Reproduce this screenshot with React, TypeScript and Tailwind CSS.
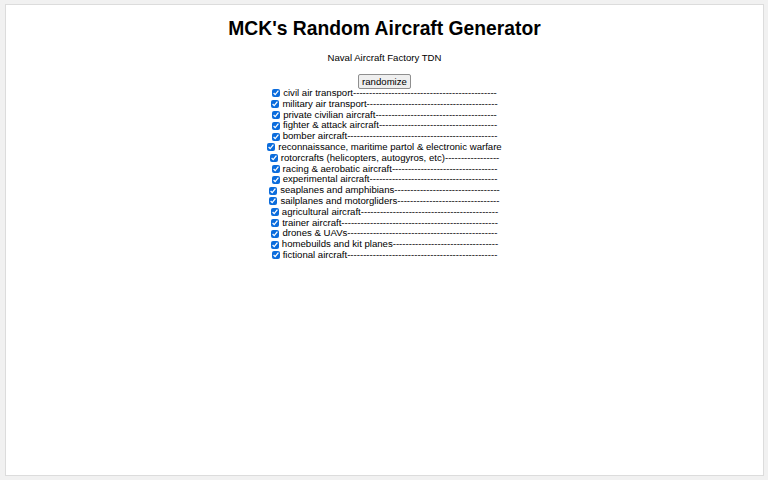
import React from "react";

// label, number of trailing dashes
const categories: [string, number][] = [
  ["civil air transport", 45],
  ["military air transport", 41],
  ["private civilian aircraft", 38],
  ["fighter & attack aircraft", 37],
  ["bomber aircraft", 47],
  ["reconnaissance, maritime partol & electronic warfare", 0],
  ["rotorcrafts (helicopters, autogyros, etc)", 17],
  ["racing & aerobatic aircraft", 33],
  ["experimental aircraft", 40],
  ["seaplanes and amphibians", 33],
  ["sailplanes and motorgliders", 32],
  ["agricultural aircraft", 43],
  ["trainer aircraft", 49],
  ["drones & UAVs", 47],
  ["homebuilds and kit planes", 33],
  ["fictional aircraft", 47],
];

export default function App() {
  return (
    <div
      className="w-[768px] h-[480px] bg-[#f1f1f1] pl-[5px] pr-[4px] pt-[4px] pb-[4px] text-black"
      style={{ fontFamily: '"Liberation Sans", Arial, sans-serif' }}
    >
      <div className="h-[472px] bg-white border border-[#dcdcdc] flex flex-col items-center">
        <h1 className="mt-[10px] text-[19.3px] leading-[28px] font-bold">
          MCK's Random Aircraft Generator
        </h1>
        <p className="mt-[9px] text-[9.6px] leading-[12px]">Naval Aircraft Factory TDN</p>
        <button className="mt-[10px] px-[3px] h-[15px] text-[9.6px] leading-[13px] bg-[#efefef] border border-[#8f8f8f] rounded-[2px]">
          randomize
        </button>
        <div className="flex flex-col items-center text-[9.6px] leading-[10.8px] mt-[-1px]">
          {categories.map(([c, n]) => (
            <label key={c} className="flex items-center whitespace-nowrap">
              <input
                type="checkbox"
                defaultChecked
                className="w-[8px] h-[8px] mr-[3px] accent-[#0b6cdc]"
              />
              <span>
                {c}
                {"-".repeat(n)}
              </span>
            </label>
          ))}
        </div>
      </div>
    </div>
  );
}
